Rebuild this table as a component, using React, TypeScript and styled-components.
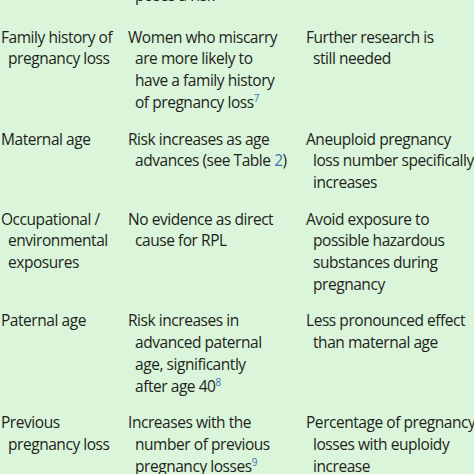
import React from "react";
import styled, { createGlobalStyle } from "styled-components";

const Global = createGlobalStyle`
  html, body { margin: 0; padding: 0; background: #daf5da; }
  body { width: 474px; height: 474px; overflow: hidden; }
`;

const Page = styled.div`
  width: 474px;
  height: 474px;
  overflow: hidden;
  background: #daf5da;
  display: flex;
  flex-direction: column;
  font-family: "Open Sans", "Noto Sans", sans-serif;
  font-size: 15.5px;
  letter-spacing: -0.45px;
  line-height: 21.7px;
  color: #231f20;
`;

const Table = styled.div`
  display: flex;
  flex-direction: column;
  gap: 15px;
  margin-top: -15px;
  padding-left: 1px;
`;

const Row = styled.div<{ $lead?: boolean }>`
  display: grid;
  grid-template-columns: 127px 178px 1fr;
  margin-bottom: ${(p) => (p.$lead ? "5px" : "0")};
`;

const Cell = styled.div<{ $cont?: boolean }>`
  padding-left: 7px;
  text-indent: ${(p) => (p.$cont ? "0" : "-7px")};
  padding-right: 2px;
  white-space: nowrap;
`;

const Line = styled.div<{ $first?: boolean }>`
  text-indent: ${(p) => (p.$first ? "inherit" : "0")};
`;

const Ref = styled.sup`
  color: #3b73b9;
  font-size: 10px;
  line-height: 0;
  vertical-align: 6px;
  letter-spacing: 0;
`;

const RefLink = styled.span`
  color: #3b73b9;
`;

type R = { a: React.ReactNode[]; b: React.ReactNode[]; c: React.ReactNode[]; cont?: boolean };

const rows: R[] = [
  { a: [], b: ["poses a risk"], c: [], cont: true },
  {
    a: ["Family history of", "pregnancy loss"],
    b: ["Women who miscarry", "are more likely to", "have a family history", <>of pregnancy loss<Ref>7</Ref></>],
    c: ["Further research is", "still needed"],
  },
  {
    a: ["Maternal age"],
    b: ["Risk increases as age", <>advances (see Table <RefLink>2</RefLink>)</>],
    c: ["Aneuploid pregnancy", "loss number specifically", "increases"],
  },
  {
    a: ["Occupational /", "environmental", "exposures"],
    b: ["No evidence as direct", "cause for RPL"],
    c: ["Avoid exposure to", "possible hazardous", "substances during", "pregnancy"],
  },
  {
    a: ["Paternal age"],
    b: ["Risk increases in", "advanced paternal", "age, significantly", <>after age 40<Ref>8</Ref></>],
    c: ["Less pronounced effect", "than maternal age"],
  },
  {
    a: ["Previous", "pregnancy loss"],
    b: ["Increases with the", "number of previous", <>pregnancy losses<Ref>9</Ref></>],
    c: ["Percentage of pregnancy", "losses with euploidy", "increase"],
  },
];

const CellLines = ({ lines, cont }: { lines: React.ReactNode[]; cont?: boolean }) => (
  <Cell $cont={cont}>
    {lines.map((l, i) => (
      <Line key={i} $first={i === 0}>{l}</Line>
    ))}
  </Cell>
);

export default function App() {
  return (
    <Page>
      <Global />
      <Table>
        {rows.map((r, i) => (
          <Row key={i} $lead={r.cont}>
            <CellLines lines={r.a} cont={r.cont} />
            <CellLines lines={r.b} cont={r.cont} />
            <CellLines lines={r.c} cont={r.cont} />
          </Row>
        ))}
      </Table>
    </Page>
  );
}
